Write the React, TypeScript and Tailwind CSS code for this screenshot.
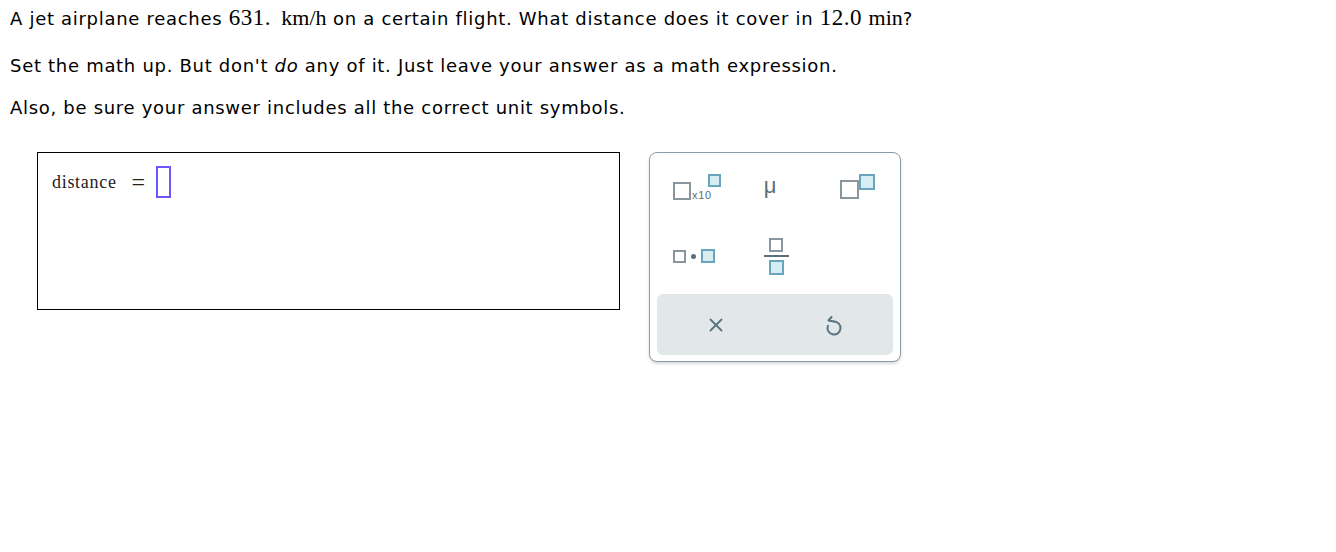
import { X } from "lucide-react";

function GrayBox({ size = 16 }: { size?: number }) {
  return (
    <span
      className="inline-block border-2 border-[#8a969d] bg-white"
      style={{ width: size, height: size }}
    />
  );
}

function BlueBox({ size = 14 }: { size?: number }) {
  return (
    <span
      className="inline-block border-2 border-[#6aa6bb] bg-[#d6edf3]"
      style={{ width: size, height: size }}
    />
  );
}

function UndoIcon() {
  return (
    <svg width="24" height="24" viewBox="0 0 24 24" fill="none" stroke="#587480" strokeWidth="2" strokeLinecap="round" strokeLinejoin="round">
      <path d="M12 8.5 A6.5 6.5 0 1 1 5.9 12.8" />
      <path d="M9.5 4 L6.5 7.5 L12 8.5" />
    </svg>
  );
}

function Palette() {
  return (
    <div className="w-[252px] rounded-lg border border-[#8a9ba5] bg-white shadow-[0_2px_3px_rgba(0,0,0,0.15)] px-[7px] pb-[6px] flex flex-col">
      <div className="grid grid-cols-3 h-[72px]">
        <div className="flex items-start justify-start pt-[29px] pl-[16px]">
          <span className="relative inline-flex items-end">
            <GrayBox size={18} />
            <span className="text-[11px] leading-none text-[#5b6f79] font-['Liberation_Sans',sans-serif] ml-[1px] mb-[-1px]">x10</span>
            <span className="absolute left-[35px] -top-[8px] flex"><BlueBox size={13} /></span>
          </span>
        </div>
        <div className="flex items-start justify-start pt-[22px] pl-[28px]">
          <span className="text-[22px] leading-none text-[#5b6f79] font-['Liberation_Sans',sans-serif]">μ</span>
        </div>
        <div className="flex items-start justify-start pt-[21px] pl-[26px]">
          <span className="inline-flex items-start">
            <span className="mt-[6px] flex"><GrayBox size={19} /></span>
            <BlueBox size={16} />
          </span>
        </div>
      </div>
      <div className="grid grid-cols-3 h-[69px]">
        <div className="flex items-start justify-start pt-[24px] pl-[16px]">
          <span className="inline-flex items-center gap-[5px]">
            <GrayBox size={13} />
            <span className="w-[5px] h-[5px] rounded-full bg-[#5b6f79]" />
            <BlueBox size={14} />
          </span>
        </div>
        <div className="flex items-start justify-start pt-[13px] pl-[28px]">
          <span className="inline-flex flex-col items-center">
            <GrayBox size={14} />
            <span className="w-[25px] h-[2px] bg-[#5b6f79] my-[3px]" />
            <BlueBox size={15} />
          </span>
        </div>
        <div />
      </div>
      <div className="h-[61px] rounded-md bg-[#e2e7ea] grid grid-cols-2">
        <div className="flex items-center justify-center">
          <X size={22} strokeWidth={2} className="text-[#587480]" />
        </div>
        <div className="flex items-center justify-center">
          <UndoIcon />
        </div>
      </div>
    </div>
  );
}

export default function App() {
  return (
    <div className="min-h-[552px] bg-white text-black font-['DejaVu_Sans',Verdana,sans-serif] text-[18px] tracking-[0.7px] pl-[10px] pt-[4px]">
      <p className="leading-[28px]">
        A jet airplane reaches{" "}
        <span className="font-['Liberation_Serif',serif] text-[23px] tracking-[0.5px]">631.</span>{" "}
        <span className="ml-[4px] font-['Liberation_Serif',serif] text-[22px] tracking-normal">km/h</span> on a certain flight. What distance
        does it cover in{" "}
        <span className="font-['Liberation_Serif',serif] text-[23px] tracking-[0.5px]">12.0</span>{" "}
        <span className="font-['Liberation_Serif',serif] text-[22px] tracking-normal">min</span>?
      </p>
      <p className="mt-[19px] leading-[28px]">
        Set the math up. But don't <i>do</i> any of it. Just leave your answer as a math expression.
      </p>
      <p className="mt-[14px] leading-[28px]">Also, be sure your answer includes all the correct unit symbols.</p>
      <div className="mt-[30px] flex items-start gap-[29px] pl-[27px]">
        <div className="w-[583px] h-[158px] border border-black bg-white pl-[14px] pt-[13px]">
          <div className="flex items-center font-['Liberation_Serif',serif] text-[18px] text-[#222]">
            <span>distance</span>
            <span className="ml-[15px] text-[24px] leading-none">=</span>
            <span className="ml-[10px] inline-block w-[15px] h-[32px] border-2 border-[#6a55ff]" />
          </div>
        </div>
        <Palette />
      </div>
    </div>
  );
}
